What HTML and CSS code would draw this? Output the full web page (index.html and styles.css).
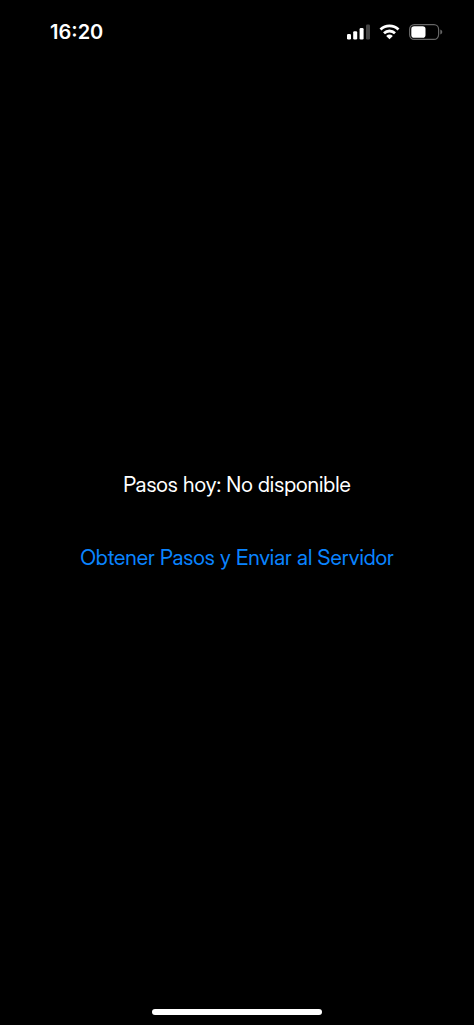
FILE: index.html
```html
<!DOCTYPE html>
<html lang="es">
<head>
<meta charset="utf-8">
<meta name="viewport" content="width=device-width, initial-scale=1">
<title>Pasos</title>
<link rel="stylesheet" href="styles.css">
</head>
<body>
<div class="screen">
  <header class="status-bar">
    <time class="clock">16:20</time>
    <div class="indicators">
      <svg class="signal" width="23" height="16" viewBox="0 0 23 16" aria-hidden="true">
        <rect x="0" y="10" width="4" height="5.500" rx="1.200" fill="#fff"/>
        <rect x="6.200" y="7.200" width="4" height="8.300" rx="1.200" fill="#fff"/>
        <rect x="12.600" y="4" width="4" height="11.500" rx="1.200" fill="#fff"/>
        <rect x="19" y=".5" width="4" height="15" rx="1.200" fill="#444"/>
      </svg>
      <svg class="wifi" width="21" height="16" viewBox="0 0 21 16" aria-hidden="true">
        <path fill="none" stroke="#fff" stroke-width="2.800" d="M1.500 5.500a13 13 0 0 1 18 0M5 9.200a8 8 0 0 1 11 0"/>
        <path fill="#fff" d="M7.200 11.900a5 5 0 0 1 6.600 0L10.500 15.200z"/>
      </svg>
      <svg class="battery" width="34" height="16" viewBox="0 0 34 16" aria-hidden="true">
        <rect x=".6" y=".6" width="29" height="14.800" rx="4.600" fill="none" stroke="#666" stroke-width="1.200"/>
        <rect x="2.300" y="2.300" width="14.200" height="11.400" rx="2.800" fill="#fff"/>
        <path fill="#666" d="M31.300 5.500q2 .8 2 2.500t-2 2.500z"/>
      </svg>
    </div>
  </header>
  <main class="content">
    <p class="steps">Pasos hoy: No disponible</p>
    <button class="send" type="button">Obtener Pasos y Enviar al Servidor</button>
  </main>
  <footer class="home"><div class="home-bar"></div></footer>
</div>
</body>
</html>
```
FILE: styles.css
```css
* { box-sizing: border-box; }
body {
  margin: 0;
  background: #000;
  color: #fff;
  font-family: Inter, "Liberation Sans", sans-serif;
}
.screen {
  min-height: 100vh;
  display: flex;
  flex-direction: column;
}
.status-bar {
  height: 64px;
  padding: 0 31px 0 50px;
  display: flex;
  align-items: center;
  justify-content: space-between;
}
.clock {
  font-size: 20px;
  font-weight: 600;
}
.indicators {
  display: flex;
  align-items: center;
  gap: 9px;
}
.content {
  flex: 1;
  display: flex;
  flex-direction: column;
  align-items: center;
  justify-content: center;
  gap: 49px;
  padding-top: 1px;
  font-family: "Inter Display", Roboto, "Liberation Sans", sans-serif;
  font-size: 21px;
  line-height: 24px;
}
.steps {
  margin: 0;
}
.send {
  padding: 0;
  border: 0;
  background: none;
  color: #0a84ff;
  font: inherit;
  cursor: pointer;
}
.home {
  height: 48px;
  padding-bottom: 10px;
  display: flex;
  align-items: flex-end;
  justify-content: center;
}
.home-bar {
  width: 36%;
  height: 6px;
  border-radius: 3px;
  background: #fff;
}
```
